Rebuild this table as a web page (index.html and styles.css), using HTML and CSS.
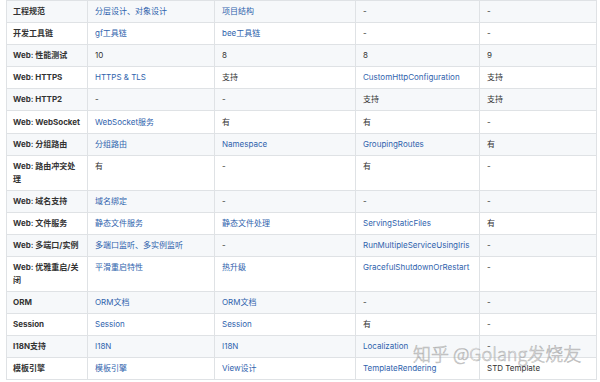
FILE: index.html
```html
<!DOCTYPE html>
<html lang="zh-CN">
<head>
    <meta charset="UTF-8">
    <meta name="viewport" content="width=device-width, initial-scale=1.0">
    <title>Go Web 框架对比</title>
    <link rel="stylesheet" href="styles.css">
</head>
<body>
    <div class="page">
        <table class="compare">
            <colgroup>
                <col class="c-name">
                <col class="c-a">
                <col class="c-b">
                <col class="c-c">
                <col class="c-d">
            </colgroup>
            <tbody>
                <tr><td>工程规范</td><td><a href="#">分层设计、对象设计</a></td><td><a href="#">项目结构</a></td><td>-</td><td>-</td></tr>
                <tr><td>开发工具链</td><td><a href="#">gf工具链</a></td><td><a href="#">bee工具链</a></td><td>-</td><td>-</td></tr>
                <tr><td>Web: 性能测试</td><td>10</td><td>8</td><td>8</td><td>9</td></tr>
                <tr><td>Web: HTTPS</td><td><a href="#">HTTPS &amp; TLS</a></td><td>支持</td><td><a href="#">CustomHttpConfiguration</a></td><td>支持</td></tr>
                <tr><td>Web: HTTP2</td><td>-</td><td>-</td><td>支持</td><td>支持</td></tr>
                <tr><td>Web: WebSocket</td><td><a href="#">WebSocket服务</a></td><td>有</td><td>有</td><td>-</td></tr>
                <tr><td>Web: 分组路由</td><td><a href="#">分组路由</a></td><td><a href="#">Namespace</a></td><td><a href="#">GroupingRoutes</a></td><td>有</td></tr>
                <tr><td>Web: 路由冲突处理</td><td>有</td><td>-</td><td>有</td><td>-</td></tr>
                <tr><td>Web: 域名支持</td><td><a href="#">域名绑定</a></td><td>-</td><td>-</td><td>-</td></tr>
                <tr><td>Web: 文件服务</td><td><a href="#">静态文件服务</a></td><td><a href="#">静态文件处理</a></td><td><a href="#">ServingStaticFiles</a></td><td>有</td></tr>
                <tr><td>Web: 多端口/实例</td><td><a href="#">多端口监听、多实例监听</a></td><td>-</td><td><a href="#">RunMultipleServiceUsingIris</a></td><td>-</td></tr>
                <tr><td>Web: 优雅重启/关闭</td><td><a href="#">平滑重启特性</a></td><td><a href="#">热升级</a></td><td><a href="#">GracefulShutdownOrRestart</a></td><td>-</td></tr>
                <tr><td>ORM</td><td><a href="#">ORM文档</a></td><td><a href="#">ORM文档</a></td><td>-</td><td>-</td></tr>
                <tr><td>Session</td><td><a href="#">Session</a></td><td><a href="#">Session</a></td><td>有</td><td>-</td></tr>
                <tr><td>I18N支持</td><td><a href="#">I18N</a></td><td><a href="#">I18N</a></td><td><a href="#">Localization</a></td><td>-</td></tr>
                <tr><td>模板引擎</td><td><a href="#">模板引擎</a></td><td><a href="#">View设计</a></td><td><a href="#">TemplateRendering</a></td><td>STD Template</td></tr>
            </tbody>
        </table>
        <div class="watermark">知乎 @Golang发烧友</div>
    </div>
</body>
</html>
```

FILE: styles.css
```css
body {
    margin: 0;
    background-color: #fff;
    font-family: Inter, "Noto Sans CJK SC", sans-serif;
    color: #333;
}
.page {
    position: relative;
    padding: 0 0 0 6px;
}
.compare {
    border-collapse: collapse;
    table-layout: fixed;
    width: 591px;
    font-size: 8px;
    line-height: 12.9px;
}
.c-name { width: 81px; }
.c-a { width: 127px; }
.c-b { width: 141px; }
.c-c { width: 124px; }
.c-d { width: 117px; }
.compare td {
    border: 1px solid #dfe2e5;
    padding: 4.1px 6px 4.1px 7px;
    vertical-align: top;
    text-align: left;
}
.compare tr:nth-child(odd) {
    background-color: #f6f8fa;
}
.compare td:first-child {
    font-weight: bold;
    padding-left: 6px;
}
.compare a {
    color: #2f63ad;
    text-decoration: none;
}
.watermark {
    position: absolute;
    left: 413px;
    top: 341px;
    font-size: 18px;
    line-height: 24px;
    font-family: "Noto Sans CJK SC", sans-serif;
    font-weight: 300;
    color: rgba(255, 255, 255, 0.6);
    -webkit-text-stroke: 0.6px rgba(120, 120, 120, 0.55);
    white-space: nowrap;
}
```
